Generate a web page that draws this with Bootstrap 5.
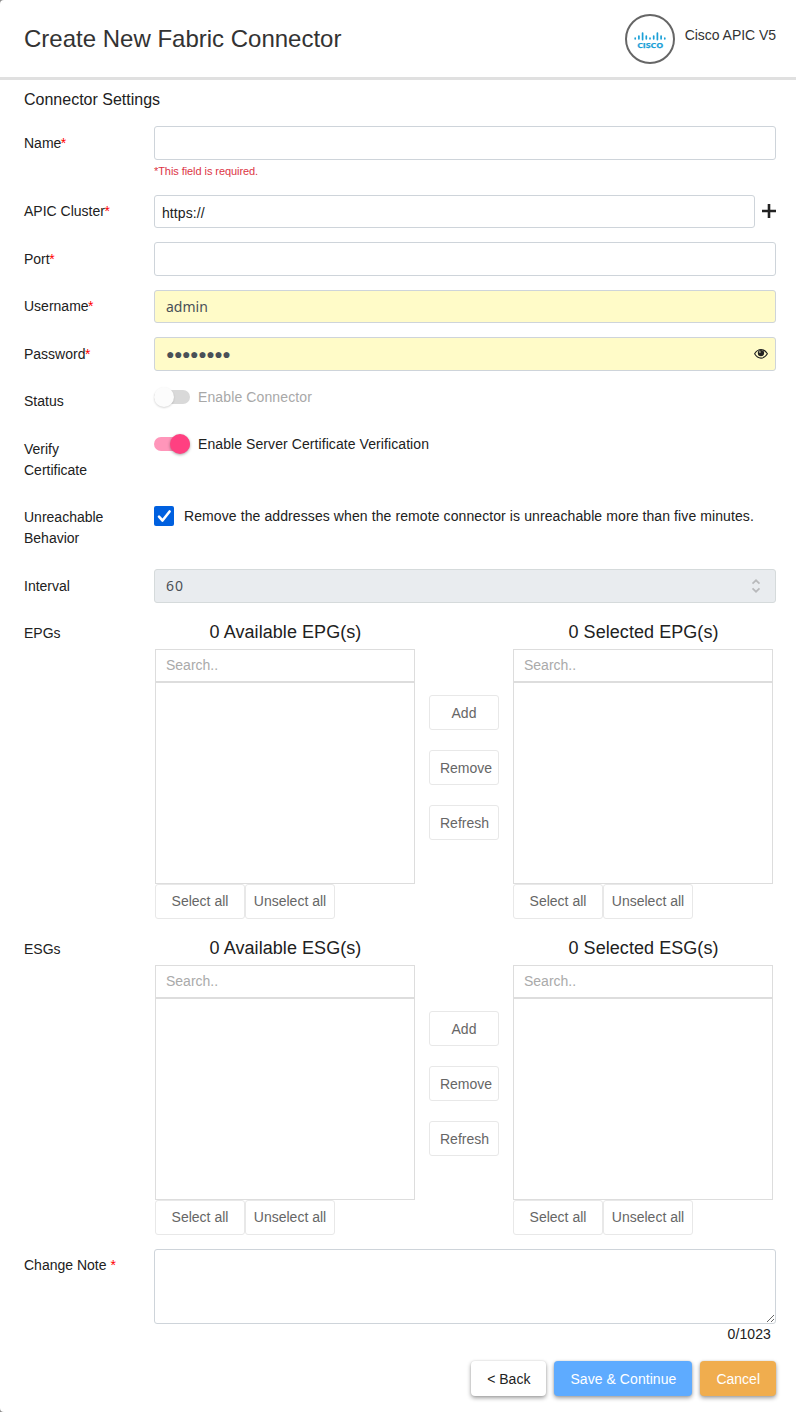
<!DOCTYPE html>
<html lang="en">
<head>
<meta charset="utf-8">
<meta name="viewport" content="width=device-width, initial-scale=1">
<title>Create New Fabric Connector</title>
<link href="https://cdn.jsdelivr.net/npm/bootstrap@5.3.0/dist/css/bootstrap.min.css" rel="stylesheet">
<style>
html, body { height: 100%; }
body { background: #8c8c8c; font-family: "Liberation Sans", Arial, sans-serif; font-size: 14px; line-height: 21px; color: #212121; }
.dialog-pane { background: #fff; min-height: 1412px; border-radius: 4px 0 0 4px; }
.dialog-head { height: 80px; border-bottom: 3px solid #e0e0e0; padding: 0 20px 0 24px; color: #333; }
.dialog-head h1 { font-size: 24px; line-height: 36px; font-weight: 400; padding-top: 21px; }
.vendor-logo { margin: 14px 10px 0 0; }
.vendor-name { padding-top: 25px; letter-spacing: -.04px; }
.section-title { font-size: 16px; line-height: 24px; font-weight: 400; padding-top: 8px; margin: 0 0 14px; }
.dialog-body { padding: 0 20px 0 24px; }
.field-row { display: flex; margin-bottom: 14px; }
.field-label { width: 130px; flex: none; padding: 6.6px 40px 5.9px 0; }
.field-label.wide { padding-right: 0; }
.field-label.note, .field-label.group { padding-top: 6px; }
.field-label.note { padding-top: 5.6px; }
.field-label span { color: #f00; margin-left: -.5px; }
.field-label.note span { margin-left: 0; }
.field-main { flex: 1; min-width: 0; }
.form-control { height: 33.5px; padding: 6px 11px; font-family: "Noto Sans", sans-serif; font-size: 14px; line-height: 20px; border-color: #ced4da; border-radius: 3px; color: #495057; }
.form-control.plain { font-family: "Liberation Sans", Arial, sans-serif; padding: 8px 7px 5px; color: #212121; letter-spacing: .08px; }
.form-control.filled { background: #fffbc8; }
.form-control.secret { letter-spacing: -.42px; }
.form-control:disabled { background: #e9ecef; border-color: #d5dadb; letter-spacing: .9px; }
.error-note { color: #dc3545; font-size: 11px; line-height: 16px; padding-top: 3px; height: 21.2px; margin-bottom: 0; letter-spacing: -.07px; }
.add-icon { margin-left: 7px; }
.option-line { height: 24px; letter-spacing: .08px; }
.option-line.status { height: 25px; letter-spacing: .12px; }
.option-line.tall { height: 31px; letter-spacing: .095px; }
.toggle { width: 36px; height: 14px; border-radius: 7px; background: #d9d9d9; position: relative; margin-right: 8px; flex: none; }
.toggle::after { content: ""; position: absolute; left: 0; top: -3px; width: 20px; height: 20px; border-radius: 50%; background: #fcfcfc; box-shadow: 0 1px 2px rgba(0,0,0,.16); }
.toggle.on { background: #ff96ba; }
.toggle.on::after { left: 16px; background: #ff4081; box-shadow: 0 1px 3px rgba(0,0,0,.35); }
.off-text { color: #a8a8a8; }
.tick-box { width: 20px; height: 20px; background: #0060df; border-radius: 2px; margin-right: 10px; flex: none; }
.in-icon { position: absolute; right: 8px; top: 50%; transform: translateY(-50%); }
.picker { height: 302.3px; padding-left: 1px; gap: 14px; }
.picker-col { width: 260px; }
.picker-col h2 { font-size: 18px; font-weight: 400; line-height: 27px; text-align: center; margin: 0; padding: 2px 0 3.3px 1px; letter-spacing: .06px; }
.picker-col input { display: block; width: 100%; height: 33px; border: 1px solid #ddd; padding: 0 10px 1px; font-size: 14px; color: #666; }
.picker-col input::placeholder { color: #aaa; opacity: 1; }
.picker-list { height: 202px; border: 1px solid #ddd; }
.pick-btn { width: 90px; height: 35px; background: #fff; border: 1px solid #e8e8e8; border-radius: 3px; color: #666; padding: 0; white-space: nowrap; }
.picker-mid { padding-top: 78.3px; gap: 20px; }
.picker-mid .pick-btn { width: 70px; padding: 2px 0 0; }
.picker-mid .pick-btn:nth-child(2) { padding-left: 4px; }
.picker-mid .pick-btn:nth-child(3) { padding-left: 1px; }
textarea.form-control { height: 75px; }
.counter { text-align: right; padding-right: 5px; line-height: 20px; letter-spacing: .1px; }
.dialog-foot { gap: 8px; margin-top: 17px; }
.foot-btn { height: 35px; padding: 2px 16px 0; font-size: 14px; border: 0; border-radius: 4px; box-shadow: 0 2px 4px rgba(0,0,0,.38), 0 0 2px rgba(0,0,0,.12); background: #fff; color: #222; }
.foot-btn.save { background: #5eabff; color: #fff; width: 138px; padding-left: 0; padding-right: 0; letter-spacing: .06px; }
.foot-btn.cancel { background: #f0ad4e; color: #fff; }
</style>
</head>
<body>
<div class="dialog-pane">
  <header class="dialog-head d-flex justify-content-between">
    <h1 class="m-0">Create New Fabric Connector</h1>
    <div class="d-flex">
      <svg class="vendor-logo" width="50" height="50" viewBox="0 0 50 50">
        <circle cx="25" cy="25" r="24" fill="#fff" stroke="#666" stroke-width="2"/>
        <g stroke="#1ba0d7" stroke-width="1.700" stroke-linecap="round">
          <path d="M10.200 24.200v.6M13.900 22v2.800M17.600 19v6.600M21.300 22v2.800M25 24.200v.6M28.700 22v2.800M32.400 19v6.600M36.100 22v2.800M39.800 24.200v.6"/>
        </g>
        <text x="12.200" y="33.600" textLength="26" lengthAdjust="spacingAndGlyphs" font-family="Open Sans, sans-serif" font-weight="700" font-size="7.600" fill="#1ba0d7" stroke="#1ba0d7" stroke-width=".25">CISCO</text>
      </svg>
      <div class="vendor-name">Cisco APIC V5</div>
    </div>
  </header>

  <main class="dialog-body">
    <h2 class="section-title">Connector Settings</h2>

    <div class="field-row">
      <label class="field-label">Name<span>*</span></label>
      <div class="field-main"><input class="form-control" type="text"><p class="error-note">*This field is required.</p></div>
    </div>
    <div class="field-row">
      <label class="field-label wide">APIC Cluster<span>*</span></label>
      <div class="field-main d-flex align-items-center">
        <input class="form-control plain" type="text" value="https://">
        <svg class="add-icon flex-shrink-0" width="14" height="14" viewBox="0 0 14 14"><path d="M7 0v14M0 7h14" stroke="#222" stroke-width="2.6"/></svg>
      </div>
    </div>
    <div class="field-row">
      <label class="field-label">Port<span>*</span></label>
      <div class="field-main"><input class="form-control" type="text"></div>
    </div>
    <div class="field-row">
      <label class="field-label">Username<span>*</span></label>
      <div class="field-main"><input class="form-control filled" type="text" value="admin"></div>
    </div>
    <div class="field-row">
      <label class="field-label">Password<span>*</span></label>
      <div class="field-main position-relative">
        <input class="form-control filled secret" type="text" value="●●●●●●●●">
        <svg class="in-icon" width="14" height="11" viewBox="0 0 14 11"><path d="M.6 5.300Q3.200 1 7 1T13.400 5.300Q10.800 9.600 7 9.600T.6 5.300Z" fill="none" stroke="#222" stroke-width="1.100"/><circle cx="7" cy="4.600" r="3.200" fill="#222"/><circle cx="5.900" cy="3.500" r=".8" fill="#fffbc8"/></svg>
      </div>
    </div>
    <div class="field-row">
      <label class="field-label">Status</label>
      <div class="field-main option-line status d-flex align-items-center align-self-start"><span class="toggle"></span><span class="off-text">Enable Connector</span></div>
    </div>
    <div class="field-row">
      <label class="field-label">Verify Certificate</label>
      <div class="field-main option-line d-flex align-items-center align-self-start"><span class="toggle on"></span><span>Enable Server Certificate Verification</span></div>
    </div>
    <div class="field-row">
      <label class="field-label">Unreachable Behavior</label>
      <div class="field-main option-line tall d-flex align-items-center align-self-start"><span class="tick-box"><svg class="d-block" width="20" height="20" viewBox="0 0 20 20"><path d="M5 10.700l3.500 3.800L15.600 5.500" fill="none" stroke="#fff" stroke-width="2.600" stroke-linecap="round" stroke-linejoin="round"/></svg></span><span>Remove the addresses when the remote connector is unreachable more than five minutes.</span></div>
    </div>
    <div class="field-row">
      <label class="field-label">Interval</label>
      <div class="field-main position-relative">
        <input class="form-control" type="text" value="60" disabled>
        <svg class="in-icon me-1" width="16" height="16" viewBox="0 0 16 16"><path d="M4.500 5.700L8 2.300l3.500 3.400M4.500 10.300L8 13.700l3.500-3.400" fill="none" stroke="#b8b9bb" stroke-width="1.700"/></svg>
      </div>
    </div>

    <div class="field-row">
      <label class="field-label group">EPGs</label>
      <div class="picker d-flex">
        <div class="picker-col"><h2>0 Available EPG(s)</h2><input type="text" placeholder="Search.."><div class="picker-list"></div><div class="d-flex"><button class="pick-btn">Select all</button><button class="pick-btn">Unselect all</button></div></div>
        <div class="picker-mid d-flex flex-column"><button class="pick-btn">Add</button><button class="pick-btn">Remove</button><button class="pick-btn">Refresh</button></div>
        <div class="picker-col"><h2>0 Selected EPG(s)</h2><input type="text" placeholder="Search.."><div class="picker-list"></div><div class="d-flex"><button class="pick-btn">Select all</button><button class="pick-btn">Unselect all</button></div></div>
      </div>
    </div>
    <div class="field-row">
      <label class="field-label group">ESGs</label>
      <div class="picker d-flex">
        <div class="picker-col"><h2>0 Available ESG(s)</h2><input type="text" placeholder="Search.."><div class="picker-list"></div><div class="d-flex"><button class="pick-btn">Select all</button><button class="pick-btn">Unselect all</button></div></div>
        <div class="picker-mid d-flex flex-column"><button class="pick-btn">Add</button><button class="pick-btn">Remove</button><button class="pick-btn">Refresh</button></div>
        <div class="picker-col"><h2>0 Selected ESG(s)</h2><input type="text" placeholder="Search.."><div class="picker-list"></div><div class="d-flex"><button class="pick-btn">Select all</button><button class="pick-btn">Unselect all</button></div></div>
      </div>
    </div>

    <div class="field-row mb-0">
      <label class="field-label wide note">Change Note <span>*</span></label>
      <div class="field-main"><textarea class="form-control"></textarea><div class="counter">0/1023</div></div>
    </div>
    <div class="dialog-foot d-flex justify-content-end">
      <button class="foot-btn">&lt; Back</button>
      <button class="foot-btn save">Save &amp; Continue</button>
      <button class="foot-btn cancel">Cancel</button>
    </div>
  </main>
</div>
<script src="https://cdn.jsdelivr.net/npm/bootstrap@5.3.0/dist/js/bootstrap.bundle.min.js"></script>
</body>
</html>
